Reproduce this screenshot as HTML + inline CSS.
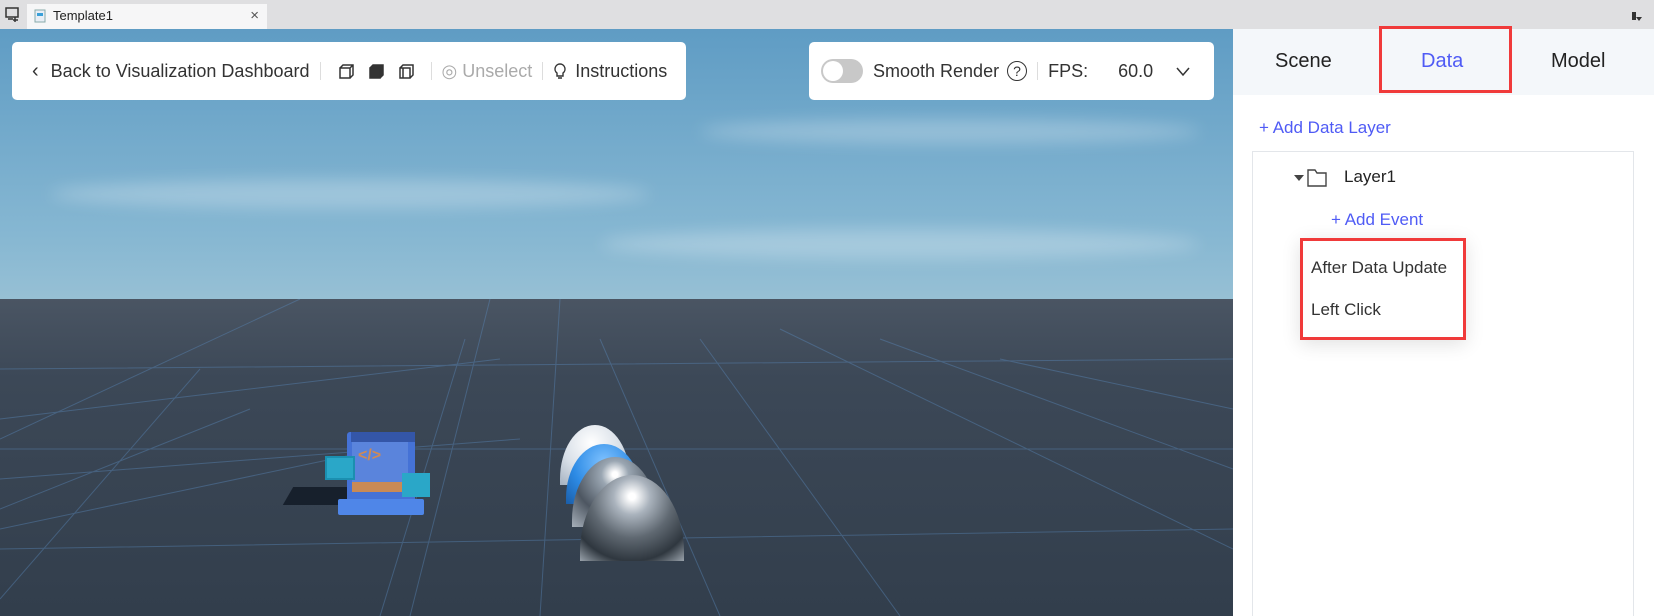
<!DOCTYPE html>
<html><head><meta charset="utf-8"><style>
*{margin:0;padding:0;box-sizing:border-box}
html,body{width:1654px;height:616px;overflow:hidden}
body{position:relative;font-family:"Liberation Sans",sans-serif;background:#fff}
.tabbar{position:absolute;left:0;top:0;width:1654px;height:29px;background:#dfdfe1}
.tab{position:absolute;left:27px;top:4px;width:240px;height:25px;background:#f6f6f7;font-size:13px;color:#222;padding:4px 0 0 26px}
.scene{position:absolute;left:0;top:29px;width:1233px;height:587px;overflow:hidden;background:linear-gradient(#5f9cc4 0%,#86b7d2 35%,#b3cfd9 65%,#d9dfdd 100%)}
.cloud{position:absolute;border-radius:50%;background:rgba(255,255,255,.25);filter:blur(8px)}
.ground{position:absolute;left:0;top:270px;width:1233px;height:317px;background:linear-gradient(#4a5563 0%,#3c4857 25%,#323e4c 100%)}
.bar{position:absolute;top:42px;height:58px;background:#fff;border-radius:5px;display:flex;align-items:center;font-size:18px;color:#333;white-space:nowrap}
.sep{width:1px;height:18px;background:#ddd;margin:0 10px}
.panel{position:absolute;left:1233px;top:29px;width:421px;height:587px;background:#fff;overflow:hidden}
.head{height:66px;background:#f4f7fa;position:relative;font-size:20px;color:#222}
.head span{position:absolute;top:21px}
.blue{color:#4f5bf5}
.tree{position:absolute;left:19px;top:122px;width:382px;height:470px;border:1px solid #e3e6ea}
.dd{position:absolute;left:1300px;top:238px;width:166px;height:102px;border:3px solid #f03a3a;background:#fff;box-shadow:0 4px 18px rgba(0,0,0,.12);font-size:17px;color:#333}
</style></head><body>
<div class="tabbar">
<svg style="position:absolute;left:5px;top:7px" width="15" height="15"><rect x="1" y="1" width="12" height="9" fill="none" stroke="#333" stroke-width="1.5"/><path d="M3 12h5M10 10v5M8 13h5" stroke="#333" stroke-width="1.5"/></svg>
<div class="tab"><svg style="position:absolute;left:7px;top:5px" width="12" height="14"><rect x="1" y="1" width="10" height="12" fill="#e8eef5" stroke="#8aa" /><rect x="3" y="4" width="6" height="3" fill="#3aa0d8"/></svg>Template1<span style="position:absolute;right:8px;top:3px;font-size:15px;color:#555">×</span></div>
<svg style="position:absolute;left:1631px;top:11px" width="12" height="12"><rect x="1" y="1" width="4" height="8" fill="#333"/><path d="M5 6h6l-3 4z" fill="#333"/></svg>
</div>
<div class="scene">
<div class="cloud" style="left:150px;top:30px;width:400px;height:30px"></div>
<div class="cloud" style="left:700px;top:90px;width:500px;height:25px"></div>
<div class="cloud" style="left:50px;top:150px;width:600px;height:30px"></div>
<div class="cloud" style="left:600px;top:200px;width:600px;height:30px"></div>
<div class="ground"></div>
<svg style="position:absolute;left:0;top:270px" width="1233" height="317" stroke="#5b8cc0" stroke-width="1" opacity=".4" fill="none">
<path d="M0 70 L1233 60 M0 150 L1233 150 M0 250 L1233 230 M0 180 L520 140 M0 230 L380 150 M0 120 L500 60 M0 210 L250 110"/>
<path d="M490 0 L410 317 M465 40 L380 317 M560 0 L540 317 M600 40 L720 317 M700 40 L900 317 M780 30 L1233 250 M880 40 L1233 170 M1000 60 L1233 110 M300 0 L0 140 M200 70 L0 300"/>
</svg>
<div style="position:absolute;left:288px;top:458px;width:100px;height:18px;background:#141d28;transform:skewX(-30deg);opacity:.9"></div>
<div style="position:absolute;left:347px;top:403px;width:68px;height:80px;background:#4572d6;border-radius:3px"></div>
<div style="position:absolute;left:351px;top:403px;width:64px;height:10px;background:#3456a8"></div>
<div style="position:absolute;left:352px;top:413px;width:56px;height:50px;background:#5a84dc;border-bottom:10px solid #c98a55"></div>
<div style="position:absolute;left:358px;top:418px;color:#d08a55;font-size:16px;font-weight:bold">&lt;/&gt;</div>
<div style="position:absolute;left:325px;top:427px;width:30px;height:24px;background:#2aa7c8;border:2px solid #1b8fb0"></div>
<div style="position:absolute;left:402px;top:444px;width:28px;height:24px;background:#2aa7c8"></div>
<div style="position:absolute;left:338px;top:470px;width:86px;height:16px;background:#4f86e8;border-radius:2px"></div>
<div style="position:absolute;left:560px;top:396px;width:70px;height:60px;border-radius:50% 50% 0 0/90% 90% 0 0;background:radial-gradient(circle at 45% 30%,#fff,#d9e0e8 50%,#9aa8b8)"></div>
<div style="position:absolute;left:566px;top:415px;width:76px;height:60px;border-radius:50% 50% 0 0/90% 90% 0 0;background:radial-gradient(circle at 50% 30%,#7fc2ff,#2d8be5 55%,#1a5da8)"></div>
<div style="position:absolute;left:572px;top:428px;width:86px;height:70px;border-radius:50% 50% 0 0/90% 90% 0 0;background:radial-gradient(circle at 50% 25%,#fff 4%,#9aa6b2 20%,#4d5661 60%,#a7b0ba)"></div>
<div style="position:absolute;left:580px;top:446px;width:104px;height:86px;border-radius:50% 50% 0 0/90% 90% 0 0;background:radial-gradient(circle at 50% 25%,#fff 4%,#aab3bd 22%,#5f6871 50%,#2f373f 78%,#9aa3ac)"></div>
</div>
<div class="bar" style="left:12px;width:674px;padding-left:20px">
<span style="font-size:20px;margin-right:12px">‹</span>Back to Visualization Dashboard<div class="sep"></div>
<svg width="18" height="18" style="margin:0 6px"><path d="M3 6h10v10H3zM3 6l3-3h10v10l-3 3M13 6l3-3" fill="none" stroke="#333" stroke-width="1.5"/></svg>
<svg width="18" height="18" style="margin:0 6px"><path d="M3 6h10v10H3zM3 6l3-3h10v10l-3 3" fill="#333" stroke="#333" stroke-width="1.5"/></svg>
<svg width="18" height="18" style="margin:0 6px"><path d="M3 6h10v10H3zM3 6l3-3h10v10l-3 3M6 6v10" fill="none" stroke="#333" stroke-width="1.5"/></svg>
<div class="sep"></div><span style="color:#aaa">◎ Unselect</span><div class="sep"></div>
<svg width="14" height="18" style="margin-right:8px"><path d="M7 2a5 5 0 0 0-3 9v3h6v-3a5 5 0 0 0-3-9zM5 16h4" fill="none" stroke="#333" stroke-width="1.4"/></svg>Instructions</div>
<div class="bar" style="left:809px;width:405px;padding-left:12px">
<div style="width:42px;height:24px;border-radius:12px;background:#c8c8c8;position:relative;margin-right:10px"><div style="position:absolute;left:2px;top:2px;width:20px;height:20px;border-radius:50%;background:#fff"></div></div>
Smooth Render<span style="display:inline-block;width:20px;height:20px;border:1.5px solid #333;border-radius:50%;font-size:14px;text-align:center;line-height:18px;margin-left:8px">?</span><div class="sep"></div>FPS:<span style="margin-left:30px">60.0</span><svg width="16" height="12" style="margin-left:22px"><path d="M2 3l6 7 6-7" fill="none" stroke="#333" stroke-width="1.5"/></svg></div>
<div class="panel">
<div class="head"><span style="left:42px">Scene</span><span class="blue" style="left:188px">Data</span><span style="left:318px">Model</span></div>
<div class="blue" style="position:absolute;left:26px;top:89px;font-size:17px">+ Add Data Layer</div>
<div class="tree">
<svg style="position:absolute;left:40px;top:14px" width="40" height="22"><path d="M1 9h10l-5 6z" fill="#444"/><path d="M15 4h7l2 3h9v13H15z" fill="none" stroke="#444" stroke-width="1.4"/></svg>
<div style="position:absolute;left:91px;top:15px;font-size:17px;color:#222">Layer1</div>
<div class="blue" style="position:absolute;left:78px;top:58px;font-size:17px">+ Add Event</div>
</div>
</div>
<div style="position:absolute;left:1379px;top:26px;width:133px;height:67px;border:3px solid #f03a3a"></div>
<div class="dd"><div style="position:absolute;left:8px;top:17px">After Data Update</div><div style="position:absolute;left:8px;top:59px">Left Click</div></div>
</body></html>
